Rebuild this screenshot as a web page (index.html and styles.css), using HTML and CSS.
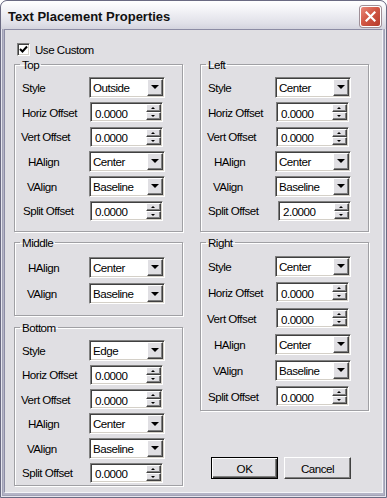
FILE: index.html
```html
<!DOCTYPE html>
<html lang="en">
<head>
  <meta charset="UTF-8" />
  <title>Text Placement Properties</title>
  <link rel="stylesheet" href="styles.css">
</head>
<body>

  <div class="window">
    <div class="titlebar">
      <span class="title">Text Placement Properties</span>
      <button class="close-btn" aria-label="Close">
        <svg width="11" height="11" viewBox="0 0 11 11">
          <path d="M1.5 1.5 L9.5 9.5 M9.5 1.5 L1.5 9.5" stroke="#fff" stroke-width="2.2" stroke-linecap="square"/>
        </svg>
      </button>
    </div>

    <div class="client">
      <label class="use-custom">
        <span class="checkbox">
          <svg width="9" height="9" viewBox="0 0 9 9"><path d="M1 4 L3.5 6.5 L8 1.5" fill="none" stroke="#000" stroke-width="2"/></svg>
        </span>
        Use Custom
      </label>

      <div class="columns">
        <!-- left column -->
        <div class="col">
          <fieldset class="group g-top">
            <legend>Top</legend>
            <div class="row"><span class="lbl">Style</span><div class="combo"><span class="val">Outside</span><span class="drop"><i class="arrow"></i></span></div></div>
            <div class="row"><span class="lbl">Horiz Offset</span><div class="spin"><span class="val">0.0000</span><span class="btns"><span class="sb"><i class="up"></i></span><span class="sb"><i class="down"></i></span></span></div></div>
            <div class="row"><span class="lbl l-vert">Vert Offset</span><div class="spin"><span class="val">0.0000</span><span class="btns"><span class="sb"><i class="up"></i></span><span class="sb"><i class="down"></i></span></span></div></div>
            <div class="row"><span class="lbl l-ha">HAlign</span><div class="combo"><span class="val">Center</span><span class="drop"><i class="arrow"></i></span></div></div>
            <div class="row"><span class="lbl l-va">VAlign</span><div class="combo"><span class="val">Baseline</span><span class="drop"><i class="arrow"></i></span></div></div>
            <div class="row"><span class="lbl l-split">Split Offset</span><div class="spin"><span class="val">0.0000</span><span class="btns"><span class="sb"><i class="up"></i></span><span class="sb"><i class="down"></i></span></span></div></div>
          </fieldset>

          <fieldset class="group g-middle">
            <legend>Middle</legend>
            <div class="row"><span class="lbl l-ha">HAlign</span><div class="combo"><span class="val">Center</span><span class="drop"><i class="arrow"></i></span></div></div>
            <div class="row"><span class="lbl l-va">VAlign</span><div class="combo"><span class="val">Baseline</span><span class="drop"><i class="arrow"></i></span></div></div>
          </fieldset>

          <fieldset class="group g-bottom">
            <legend>Bottom</legend>
            <div class="row"><span class="lbl">Style</span><div class="combo"><span class="val">Edge</span><span class="drop"><i class="arrow"></i></span></div></div>
            <div class="row"><span class="lbl">Horiz Offset</span><div class="spin"><span class="val">0.0000</span><span class="btns"><span class="sb"><i class="up"></i></span><span class="sb"><i class="down"></i></span></span></div></div>
            <div class="row"><span class="lbl l-vert">Vert Offset</span><div class="spin"><span class="val">0.0000</span><span class="btns"><span class="sb"><i class="up"></i></span><span class="sb"><i class="down"></i></span></span></div></div>
            <div class="row"><span class="lbl l-ha">HAlign</span><div class="combo"><span class="val">Center</span><span class="drop"><i class="arrow"></i></span></div></div>
            <div class="row"><span class="lbl l-va">VAlign</span><div class="combo"><span class="val">Baseline</span><span class="drop"><i class="arrow"></i></span></div></div>
            <div class="row"><span class="lbl">Split Offset</span><div class="spin"><span class="val">0.0000</span><span class="btns"><span class="sb"><i class="up"></i></span><span class="sb"><i class="down"></i></span></span></div></div>
          </fieldset>
        </div>

        <!-- right column -->
        <div class="col">
          <fieldset class="group g-top">
            <legend>Left</legend>
            <div class="row"><span class="lbl">Style</span><div class="combo"><span class="val">Center</span><span class="drop"><i class="arrow"></i></span></div></div>
            <div class="row"><span class="lbl">Horiz Offset</span><div class="spin"><span class="val">0.0000</span><span class="btns"><span class="sb"><i class="up"></i></span><span class="sb"><i class="down"></i></span></span></div></div>
            <div class="row"><span class="lbl l-vert">Vert Offset</span><div class="spin"><span class="val">0.0000</span><span class="btns"><span class="sb"><i class="up"></i></span><span class="sb"><i class="down"></i></span></span></div></div>
            <div class="row"><span class="lbl l-ha">HAlign</span><div class="combo"><span class="val">Center</span><span class="drop"><i class="arrow"></i></span></div></div>
            <div class="row"><span class="lbl l-va">VAlign</span><div class="combo"><span class="val">Baseline</span><span class="drop"><i class="arrow"></i></span></div></div>
            <div class="row"><span class="lbl">Split Offset</span><div class="spin wide-gap"><span class="val">2.0000</span><span class="btns"><span class="sb"><i class="up"></i></span><span class="sb"><i class="down"></i></span></span></div></div>
          </fieldset>

          <fieldset class="group g-right">
            <legend>Right</legend>
            <div class="row"><span class="lbl">Style</span><div class="combo"><span class="val">Center</span><span class="drop"><i class="arrow"></i></span></div></div>
            <div class="row"><span class="lbl">Horiz Offset</span><div class="spin"><span class="val">0.0000</span><span class="btns"><span class="sb"><i class="up"></i></span><span class="sb"><i class="down"></i></span></span></div></div>
            <div class="row"><span class="lbl l-vert">Vert Offset</span><div class="spin"><span class="val">0.0000</span><span class="btns"><span class="sb"><i class="up"></i></span><span class="sb"><i class="down"></i></span></span></div></div>
            <div class="row"><span class="lbl l-ha">HAlign</span><div class="combo"><span class="val">Center</span><span class="drop"><i class="arrow"></i></span></div></div>
            <div class="row"><span class="lbl l-va">VAlign</span><div class="combo"><span class="val">Baseline</span><span class="drop"><i class="arrow"></i></span></div></div>
            <div class="row"><span class="lbl">Split Offset</span><div class="spin"><span class="val">0.0000</span><span class="btns"><span class="sb"><i class="up"></i></span><span class="sb"><i class="down"></i></span></span></div></div>
          </fieldset>

          <div class="buttons">
            <button class="btn btn-default">OK</button>
            <button class="btn">Cancel</button>
          </div>
        </div>
      </div>
    </div>
  </div>

</body>
</html>
```

FILE: styles.css
```css
* {
  box-sizing: border-box;
}

body {
  margin: 0;
  font-family: 'Liberation Sans', Arial, sans-serif;
  font-size: 11.6px;
  letter-spacing: -0.5px;
  color: #000;
  background: #fff;
}

/* window frame */
.window {
  width: 387px;
  height: 498px;
  display: flex;
  flex-direction: column;
  background: #b4b4c6;
  border: 1px solid #6a6a82;
  border-radius: 7px 7px 0 0;
  padding: 0 3px 4px 3px;
  box-shadow: inset 0 0 0 1px #e6e6ee, inset 0 0 0 2px #a2a2b6;
  overflow: hidden;
}

.titlebar {
  height: 28px;
  margin: 0 -3px;
  padding: 0 5px 0 7px;
  display: flex;
  align-items: center;
  justify-content: space-between;
  background: linear-gradient(to bottom, #ffffff 0%, #f2f2f6 35%, #e0e0e8 80%, #d4d4de 100%);
  border-radius: 6px 6px 0 0;
}

.title {
  font-size: 13px;
  font-weight: bold;
  letter-spacing: 0;
  color: #111;
  padding-top: 2px;
}

.close-btn {
  width: 21px;
  height: 21px;
  margin-top: 2px;
  padding: 0;
  border: 1px solid #fff;
  border-radius: 3px;
  background: linear-gradient(to bottom right, #e98a7c, #d25845 45%, #b63a2a);
  box-shadow: 0 0 0 1px #9f8f97;
  display: flex;
  align-items: center;
  justify-content: center;
}

.client {
  flex: 1;
  background: #e0dfe3;
  border: 1px solid #8c8ca4;
  border-right-color: #f4f4f8;
  border-bottom-color: #f4f4f8;
  padding: 13px 0 0 9px;
}

/* checkbox */
.use-custom {
  display: flex;
  align-items: center;
  height: 13px;
  margin-left: 3px;
}

.checkbox {
  width: 13px;
  height: 13px;
  margin-right: 5px;
  background: #fff;
  border: 1px solid;
  border-color: #808080 #fff #fff #808080;
  box-shadow: inset 1px 1px #404040, inset -1px -1px #d4d0c8;
  display: flex;
  align-items: center;
  justify-content: center;
}

.columns {
  display: grid;
  grid-template-columns: 169px 169px;
  column-gap: 17px;
  margin-top: 2px;
}

.col {
  display: flex;
  flex-direction: column;
}

/* group boxes */
.group {
  margin: 0;
  padding: 4px 0 8px 0;
  min-width: 0;
  border: 1px solid #a0a0a4;
  box-shadow: 1px 1px #fff, inset 1px 1px #fff;
  --rh: 24.7px;
}

.group legend {
  margin-left: 5px;
  padding: 0 2px;
  line-height: 13px;
}

.g-middle {
  margin-top: 4px;
  padding: 5px 0 8px 0;
  --rh: 26.5px;
}

.g-bottom {
  margin-top: 5px;
  padding: 4px 0 0 0;
  --rh: 24.5px;
}

.g-right {
  margin-top: 4px;
  padding: 4px 0 1px 0;
  --rh: 26px;
}

.row {
  display: flex;
  align-items: center;
  height: var(--rh);
}

.lbl {
  width: 74px;
  padding-left: 7px;
  white-space: nowrap;
}

.l-vert { padding-left: 6px; }
.l-ha { padding-left: 13px; }
.l-va { padding-left: 12px; }
.l-split { padding-left: 8px; }

/* combo box */
.combo {
  width: 76px;
  height: 21px;
  display: flex;
  background: #fff;
  border: 1px solid;
  border-color: #808080 #fff #fff #808080;
  box-shadow: inset 1px 1px #404040, inset -1px -1px #d4d0c8;
  padding: 1px;
}

.val {
  flex: 1;
  display: flex;
  align-items: center;
  padding-left: 2px;
}

.drop {
  width: 16px;
  background: #e0dfe3;
  border: 1px solid;
  border-color: #fff #404040 #404040 #fff;
  box-shadow: inset -1px -1px #808080;
  display: flex;
  align-items: center;
  justify-content: center;
}

.arrow {
  width: 0;
  height: 0;
  border-left: 4px solid transparent;
  border-right: 4px solid transparent;
  border-top: 4px solid #000;
  margin-right: 1px;
}

/* spin edit */
.spin {
  width: 73px;
  height: 20px;
  margin-left: 1px;
  display: flex;
  background: #fff;
  border: 1px solid;
  border-color: #808080 #fff #fff #808080;
  box-shadow: inset 1px 1px #404040, inset -1px -1px #d4d0c8;
  padding: 1px;
}

.spin .val {
  padding-left: 3px;
  padding-top: 2px;
}

.spin.wide-gap {
  margin-left: 3px;
}

.btns {
  width: 15px;
  display: flex;
  flex-direction: column;
}

.sb {
  flex: 1;
  background: #e0dfe3;
  border: 1px solid;
  border-color: #fff #404040 #404040 #fff;
  box-shadow: inset -1px -1px #808080;
  display: flex;
  align-items: center;
  justify-content: center;
}

.sb i {
  width: 0;
  height: 0;
  border-left: 2px solid transparent;
  border-right: 2px solid transparent;
  margin-right: 1px;
}

.sb .up { border-bottom: 2px solid #000; }
.sb .down { border-top: 2px solid #000; }

/* dialog buttons */
.buttons {
  display: flex;
  gap: 6px;
  margin: 46px 0 0 11px;
}

.btn {
  width: 67px;
  height: 22px;
  padding: 0;
  font-family: inherit;
  font-size: 11.6px;
  letter-spacing: -0.5px;
  color: #000;
  background: #e0dfe3;
  border: 1px solid;
  border-color: #fff #404040 #404040 #fff;
  box-shadow: inset -1px -1px #808080;
}

.btn-default {
  border: 1px solid #000;
  box-shadow: inset 1px 1px #fff, inset -1px -1px #404040, inset -2px -2px #808080;
}
```
